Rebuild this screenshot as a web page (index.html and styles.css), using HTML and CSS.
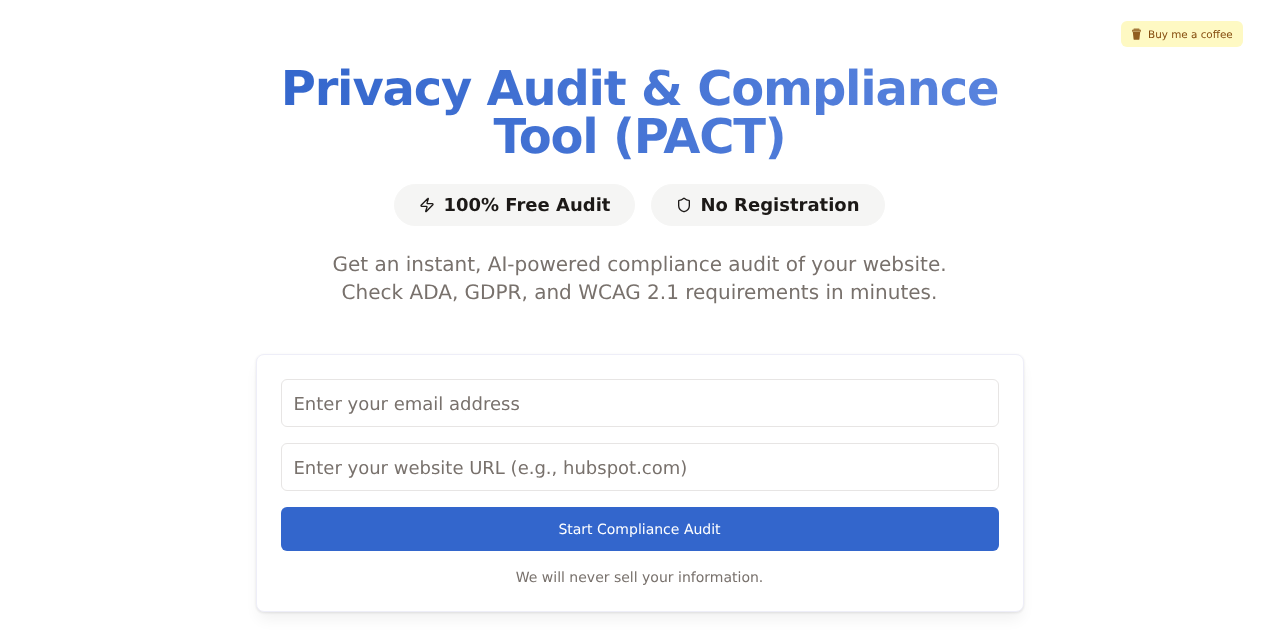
FILE: index.html
```html
<!DOCTYPE html>
<html lang="en">
<head>
<meta charset="utf-8">
<title>Privacy Audit &amp; Compliance Tool (PACT)</title>
<link rel="stylesheet" href="styles.css">
</head>
<body>
<a class="coffee" href="#">
  <svg class="coffee-icon" viewBox="0 0 12 12" aria-hidden="true"><path class="cup-lid" d="M2.8 0.4h5.4l.5 1.4h1.3v1.9H1V1.8h1.3z"/><path class="cup-body" d="M1.8 4h7.4l-.8 7.2a.8.8 0 0 1-.8.6H3.4a.8.8 0 0 1-.8-.6z"/></svg>
  <span class="coffee-text">Buy me a coffee</span>
</a>
<main class="page">
  <h1 class="title">Privacy Audit &amp; Compliance Tool (PACT)</h1>
  <div class="badges">
    <div class="badge">
      <svg class="badge-icon" viewBox="0 0 24 24" aria-hidden="true"><path d="M4 14a1 1 0 0 1-.78-1.63l9.9-10.2a.5.5 0 0 1 .86.46l-1.92 6.02A1 1 0 0 0 13 10h7a1 1 0 0 1 .78 1.63l-9.9 10.2a.5.5 0 0 1-.86-.46l1.92-6.02A1 1 0 0 0 11 14z"/></svg>
      <span class="badge-text">100% Free Audit</span>
    </div>
    <div class="badge">
      <svg class="badge-icon" viewBox="0 0 24 24" aria-hidden="true"><path d="M20 13c0 5-3.5 7.5-7.66 8.95a1 1 0 0 1-.67-.01C7.5 20.5 4 18 4 13V6a1 1 0 0 1 1-1c2 0 4.5-1.2 6.24-2.72a1.17 1.17 0 0 1 1.52 0C14.51 3.81 17 5 19 5a1 1 0 0 1 1 1z"/></svg>
      <span class="badge-text">No Registration</span>
    </div>
  </div>
  <p class="lead">Get an instant, AI-powered compliance audit of your website.<br>Check ADA, GDPR, and WCAG 2.1 requirements in minutes.</p>
  <form class="card">
    <input class="field" type="email" placeholder="Enter your email address">
    <input class="field" type="text" placeholder="Enter your website URL (e.g., hubspot.com)">
    <button class="submit" type="button">Start Compliance Audit</button>
    <p class="note">We will never sell your information.</p>
  </form>
</main>
</body>
</html>
```
FILE: styles.css
```css
* {
  box-sizing: border-box;
}

html,
body {
  margin: 0;
  height: 100%;
  overflow: hidden;
  background: #fff;
}

body {
  font-family: "DejaVu Sans", sans-serif;
  color: #1c1917;
  text-rendering: geometricPrecision;
}

.coffee {
  position: absolute;
  top: 21px;
  right: 36px;
  display: flex;
  align-items: center;
  gap: 5px;
  height: 26px;
  padding: 0 10px;
  border-radius: 6px;
  background: #fef9c3;
  color: #854d0e;
  font-size: 10.4px;
  text-decoration: none;
  will-change: transform;
}

.coffee-text {
  padding-top: 2px;
}

.coffee-icon {
  width: 12px;
  height: 12px;
  flex: none;
}

.cup-lid {
  fill: #854d0e;
  opacity: 0.75;
}

.cup-body {
  fill: #854d0e;
  opacity: 0.9;
}

.page {
  display: flex;
  flex-direction: column;
  align-items: center;
  padding-top: 64px;
  will-change: transform;
}

.title {
  width: 768px;
  margin: 0;
  padding-top: 1px;
  font-size: 48px;
  line-height: 48px;
  font-weight: 700;
  letter-spacing: -1.2px;
  text-align: center;
  background: linear-gradient(to right, #3366cc, #5a84de);
  -webkit-background-clip: text;
  background-clip: text;
  color: transparent;
}

.badges {
  display: flex;
  gap: 16px;
  margin-top: 23px;
}

.badge {
  display: flex;
  align-items: center;
  gap: 8px;
  height: 42px;
  padding: 0 24px;
  border: 1px solid #f5f5f4;
  border-radius: 21px;
  background: #f5f5f4;
  font-size: 18px;
  line-height: 28px;
  font-weight: 700;
  color: #1c1917;
}

.badge-text {
  padding-top: 1px;
}

.badge-icon {
  width: 16px;
  height: 16px;
  flex: none;
  fill: none;
  stroke: #1c1917;
  stroke-width: 2;
  stroke-linecap: round;
  stroke-linejoin: round;
}

.lead {
  margin: 24px 0 0;
  font-size: 20px;
  line-height: 28px;
  text-align: center;
  color: #78716c;
}

.card {
  display: flex;
  flex-direction: column;
  gap: 16px;
  width: 768px;
  margin-top: 48px;
  padding: 24px 24px 23px;
  background: #fff;
  border: 1px solid #eeeef8;
  border-radius: 8px;
  box-shadow: 0 10px 15px -3px rgba(0, 0, 0, 0.06), 0 1px 3px rgba(0, 0, 0, 0.1);
}

.field {
  height: 48px;
  padding: 2px 12px 0;
  border: 1px solid #e7e5e4;
  border-radius: 6px;
  background: #fff;
  font: 18px "DejaVu Sans", sans-serif;
  color: #1c1917;
  text-rendering: geometricPrecision;
}

.field::placeholder {
  color: #78716c;
  opacity: 1;
}

.submit {
  height: 44px;
  padding: 2px 0 0;
  border: 0;
  border-radius: 6px;
  background: #3366cc;
  color: #fff;
  font: 14px "DejaVu Sans", sans-serif;
  text-rendering: geometricPrecision;
}

.note {
  margin: 0;
  padding-top: 1px;
  font-size: 14px;
  line-height: 20px;
  text-align: center;
  color: #78716c;
}
```
